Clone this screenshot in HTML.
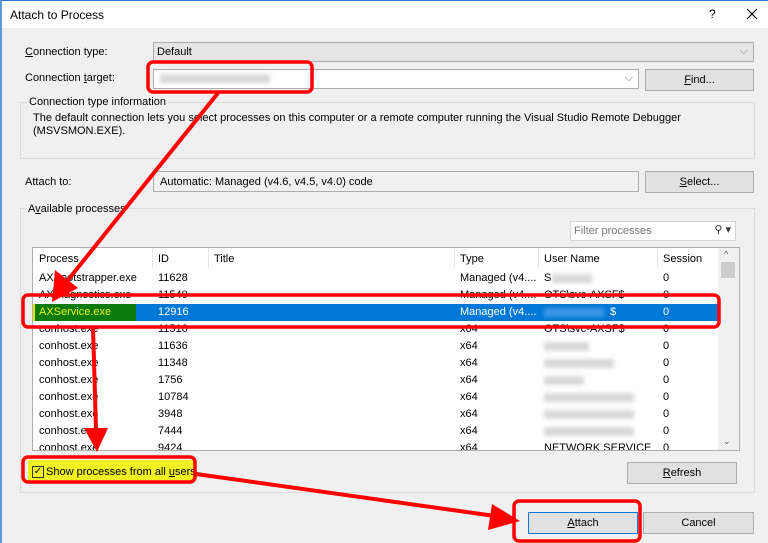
<!DOCTYPE html>
<html><head><meta charset="utf-8"><style>
*{box-sizing:border-box;margin:0;padding:0}
body{width:768px;height:543px;overflow:hidden;background:#f0f0f0;font-family:"Liberation Sans",sans-serif;font-size:11px;color:#000;position:relative}
.a{position:absolute}
.btn{position:absolute;background:#e1e1e1;border:1px solid #adadad;text-align:center;line-height:21px}
.combo{position:absolute;border:1px solid #acacac}
.grp{position:absolute;border:1px solid #dcdcdc}
.row{position:absolute;left:33px;width:685px;height:17px;line-height:17px}
.row span{position:absolute}
u{text-decoration:underline}
.blur{background:#d8d8d8;filter:blur(2px);position:absolute;height:9px;top:4px}
</style></head><body>
<div class="a" style="left:0;top:0;width:768px;height:28px;background:#fff;border-top:1px solid #2b79d0"></div>
<div class="a" style="left:0;top:0;width:2px;height:543px;background:#5a9be0"></div>
<div class="a" style="left:10px;top:8px;font-size:12px">Attach to Process</div>
<div class="a" style="left:709px;top:7px;font-size:12px">?</div>
<svg class="a" style="left:746px;top:8px" width="12" height="12"><path d="M1 1L11 11M11 1L1 11" stroke="#000" stroke-width="1.2"/></svg>

<div class="a" style="left:25px;top:46px"><u>C</u>onnection type:</div>
<div class="combo" style="left:153px;top:42px;width:601px;height:20px;background:#e5e5e5"><span class="a" style="left:3px;top:3px">Default</span><span class="a" style="right:5px;top:2px;color:#777">⌵</span></div>
<div class="a" style="left:25px;top:72px">Connection <u>t</u>arget:</div>
<div class="combo" style="left:153px;top:69px;width:486px;height:20px;background:#fff"><div class="blur" style="left:6px;width:110px"></div><span class="a" style="right:5px;top:2px;color:#777">⌵</span></div>
<div class="btn" style="left:645px;top:69px;width:109px;height:22px"><u>F</u>ind...</div>

<div class="grp" style="left:20px;top:102px;width:735px;height:57px"></div>
<div class="a" style="left:27px;top:96px;background:#f0f0f0;padding:0 2px">Connection type information</div>
<div class="a" style="left:33px;top:112px;line-height:13px">The default connection lets you select processes on this computer or a remote computer running the Visual Studio Remote Debugger<br>(MSVSMON.EXE).</div>

<div class="a" style="left:25px;top:176px">Attach to:</div>
<div class="combo" style="left:153px;top:171px;width:486px;height:21px;background:#f0f0f0"><span class="a" style="left:6px;top:4px">Automatic: Managed (v4.6, v4.5, v4.0) code</span></div>
<div class="btn" style="left:645px;top:171px;width:109px;height:22px"><u>S</u>elect...</div>

<div class="grp" style="left:20px;top:208px;width:735px;height:285px"></div>
<div class="a" style="left:26px;top:203px;background:#f0f0f0;padding:0 2px">A<u>v</u>ailable processes</div>
<div class="a" style="left:570px;top:221px;width:166px;height:20px;background:#fff;border:1px solid #d5d5d5;color:#777;padding:3px 3px">Filter processes<span class="a" style="right:4px;top:1px;color:#333">⚲ ▾</span></div>

<div class="a" style="left:32px;top:247px;width:708px;height:204px;background:#fff;border:1px solid #adadad;overflow:hidden">
</div>
<div class="a" style="left:33px;top:248px;width:685px;height:202px;overflow:hidden">
 <div class="a" style="left:0;top:0;width:685px;height:21px">
  <span class="a" style="left:6px;top:5px">Process</span><span class="a" style="left:125px;top:5px">ID</span><span class="a" style="left:181px;top:5px">Title</span><span class="a" style="left:427px;top:5px">Type</span><span class="a" style="left:511px;top:5px">User Name</span><span class="a" style="left:630px;top:5px">Session</span>
  <div class="a" style="left:119px;top:0;width:1px;height:20px;background:#e5e5e5"></div>
  <div class="a" style="left:175px;top:0;width:1px;height:20px;background:#e5e5e5"></div>
  <div class="a" style="left:421px;top:0;width:1px;height:20px;background:#e5e5e5"></div>
  <div class="a" style="left:505px;top:0;width:1px;height:20px;background:#e5e5e5"></div>
  <div class="a" style="left:624px;top:0;width:1px;height:20px;background:#e5e5e5"></div>
 </div>
</div>
<div class="row" style="top:270px"><span style="left:6px">AXBootstrapper.exe</span><span style="left:125px">11628</span><span style="left:427px">Managed (v4....</span><span style="left:511px">S</span><div class="blur" style="left:519px;width:40px"></div><span style="left:630px">0</span></div>
<div class="row" style="top:287px"><span style="left:6px">AXDiagnostics.exe</span><span style="left:125px">11540</span><span style="left:427px">Managed (v4....</span><span style="left:511px">OTS\svc-AXSF$</span><span style="left:630px">0</span></div>
<div class="row" style="top:304px;background:#0078d7;color:#fff"><span style="left:0;width:2px;height:17px;background:#e6e600"></span><span style="left:2px;width:101px;height:17px;background:#0a7a0a"></span><span style="left:6px;color:#e8f020">AXService.exe</span><span style="left:125px">12916</span><span style="left:427px">Managed (v4....</span><div class="blur" style="left:511px;width:60px;background:#3d97e6"></div><span style="left:577px">$</span><span style="left:630px">0</span></div>
<div class="row" style="top:321px"><span style="left:6px">conhost.exe</span><span style="left:125px">11516</span><span style="left:427px">x64</span><span style="left:511px">OTS\svc-AXSF$</span><span style="left:630px">0</span></div>
<div class="row" style="top:338px"><span style="left:6px">conhost.exe</span><span style="left:125px">11636</span><span style="left:427px">x64</span><div class="blur" style="left:511px;width:45px"></div><span style="left:630px">0</span></div>
<div class="row" style="top:355px"><span style="left:6px">conhost.exe</span><span style="left:125px">11348</span><span style="left:427px">x64</span><div class="blur" style="left:511px;width:70px"></div><span style="left:630px">0</span></div>
<div class="row" style="top:372px"><span style="left:6px">conhost.exe</span><span style="left:125px">1756</span><span style="left:427px">x64</span><div class="blur" style="left:511px;width:40px"></div><span style="left:630px">0</span></div>
<div class="row" style="top:389px"><span style="left:6px">conhost.exe</span><span style="left:125px">10784</span><span style="left:427px">x64</span><div class="blur" style="left:511px;width:90px"></div><span style="left:630px">0</span></div>
<div class="row" style="top:406px"><span style="left:6px">conhost.exe</span><span style="left:125px">3948</span><span style="left:427px">x64</span><div class="blur" style="left:511px;width:90px"></div><span style="left:630px">0</span></div>
<div class="row" style="top:423px"><span style="left:6px">conhost.exe</span><span style="left:125px">7444</span><span style="left:427px">x64</span><div class="blur" style="left:511px;width:90px"></div><span style="left:630px">0</span></div>
<div class="row" style="top:440px;height:10px;overflow:hidden"><span style="left:6px">conhost.exe</span><span style="left:125px">9424</span><span style="left:427px">x64</span><span style="left:511px">NETWORK SERVICE</span><span style="left:630px">0</span></div>
<div class="a" style="left:718px;top:248px;width:21px;height:202px;background:#f0f0f0"></div>
<div class="a" style="left:721px;top:262px;width:14px;height:16px;background:#cdcdcd"></div>
<div class="a" style="left:724px;top:249px;font-size:9px;color:#555">^</div>
<div class="a" style="left:723px;top:436px;font-size:9px;color:#555">⌄</div>

<div class="a" style="left:28px;top:460px;width:168px;height:21px;background:#f0f020"></div>
<div class="a" style="left:32px;top:466px;width:12px;height:12px;border:1px solid #333;background:#f0f020;font-size:10px;line-height:10px;text-align:center">✓</div>
<div class="a" style="left:46px;top:466px">Show processes from all <u>u</u>sers</div>
<div class="btn" style="left:627px;top:462px;width:110px;height:22px"><u>R</u>efresh</div>

<div class="btn" style="left:528px;top:512px;width:110px;height:22px;border:1px solid #0078d7"><u>A</u>ttach</div>
<div class="btn" style="left:643px;top:512px;width:111px;height:22px">Cancel</div>

<svg class="a" style="left:0;top:0" width="768" height="543">
<g fill="none" stroke="#f00" stroke-width="3.5">
<rect x="148" y="62" width="164" height="30" rx="5"/>
<rect x="23" y="295" width="696" height="32" rx="5"/>
<rect x="23" y="457" width="172" height="25" rx="5"/>
<rect x="514" y="501" width="126" height="40" rx="5"/>
<line x1="218" y1="93" x2="64" y2="285" stroke-width="4"/>
<line x1="93" y1="327" x2="96" y2="430" stroke-width="4"/>
<line x1="196" y1="474" x2="495" y2="516" stroke-width="4"/>
</g>
<g fill="#f00">
<polygon points="52,302 55,270 78,288"/>
<polygon points="84,428 108,428 97,452"/>
<polygon points="520,521 492,504 488,530"/>
</g>
</svg>
</body></html>
